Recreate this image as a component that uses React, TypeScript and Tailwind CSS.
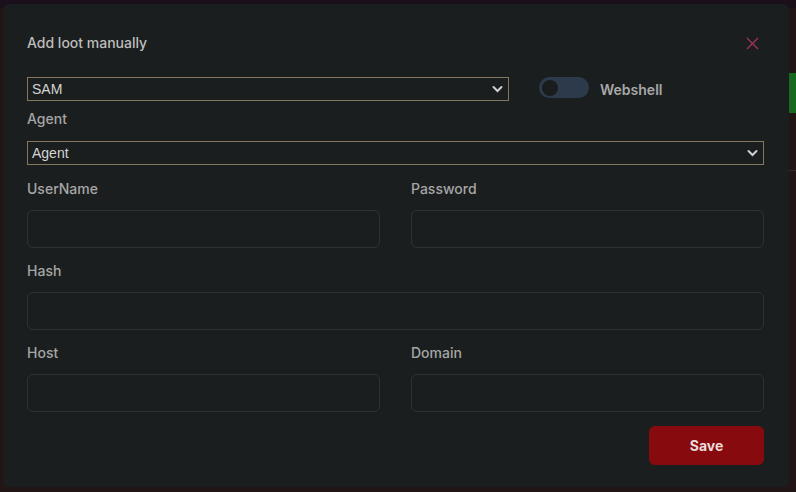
import React, { useState } from "react";

const labelCls = "block h-5 leading-5 text-[14px] font-medium text-[#a6a6a6]";
const inputCls =
  "block w-full h-[38px] rounded-md border border-[#2e3234] bg-transparent px-3 text-[13px] text-[#d0d0d0] outline-none";

const Chevron: React.FC = () => (
  <svg
    className="pointer-events-none absolute right-[6px] top-1/2 -translate-y-1/2"
    width="11"
    height="8"
    viewBox="0 0 11 8"
    fill="none"
  >
    <path d="M1.5 2 L5.5 6 L9.5 2" stroke="#d0d0d0" strokeWidth="2" strokeLinecap="round" />
  </svg>
);

const Select: React.FC<{ value: string; options: string[]; className?: string }> = ({
  value,
  options,
  className,
}) => (
  <div className={"relative " + (className || "")}>
    <select
      defaultValue={value}
      className="block w-full h-6 appearance-none border border-[#85765e] bg-[#1b1e1f] pl-1 pr-6 text-[14px] text-[#d4d4d4] outline-none font-['Liberation_Sans',Arial,sans-serif]"
    >
      {options.map((o) => (
        <option key={o}>{o}</option>
      ))}
    </select>
    <Chevron />
  </div>
);

const App: React.FC = () => {
  const [webshell, setWebshell] = useState(false);

  return (
    <div className="relative w-[796px] h-[492px] overflow-hidden bg-[#221515] font-['Inter','Open_Sans',sans-serif]">
      {/* page behind the dialog */}
      <div className="h-[8px] bg-[#1a0f1b]" />
      <div className="absolute right-0 top-[73px] h-[40px] w-[7px] bg-[#17691f]" />
      <div className="absolute right-0 top-[170px] h-px w-[7px] bg-[#3a2a2a]" />

      {/* dialog */}
      <div className="absolute left-[3px] top-[4px] w-[786px] h-[483px] rounded-md bg-[#1b1e1f] pl-6 pr-[25px] pt-[29px]">
        <div className="flex items-center justify-between h-5">
          <h2 className="text-[14px] leading-5 font-medium text-[#bdbdbd]">Add loot manually</h2>
          <button className="mr-[4px] flex h-4 w-4 items-center justify-center">
            <svg width="13" height="13" viewBox="0 0 13 13">
              <path d="M1 1 L12 12 M12 1 L1 12" stroke="#9e3458" strokeWidth="1.3" />
            </svg>
          </button>
        </div>

        <div className="mt-6 flex items-start">
          <Select value="SAM" options={["SAM", "LSA", "NTDS"]} className="w-[482px]" />
          <button
            onClick={() => setWebshell(!webshell)}
            className="ml-[30px] flex h-[21px] w-[50px] items-center rounded-full bg-[#2c3a4b] px-[3px]"
          >
            <span
              className={
                "block h-4 w-4 rounded-full bg-[#1a1c1d] transition-transform " +
                (webshell ? "translate-x-[28px]" : "")
              }
            />
          </button>
          <span className="ml-[11px] mt-[3px] text-[14px] leading-5 font-semibold text-[#a8a8a8]">
            Webshell
          </span>
        </div>

        <label className={labelCls + " mt-2"}>Agent</label>
        <Select value="Agent" options={["Agent"]} className="mt-3" />

        <div className="mt-[14px] grid grid-cols-2 gap-x-[31px]">
          <div>
            <label className={labelCls}>UserName</label>
            <input className={inputCls + " mt-[11px]"} />
          </div>
          <div>
            <label className={labelCls}>Password</label>
            <input type="password" className={inputCls + " mt-[11px]"} />
          </div>
        </div>

        <div className="mt-[13px]">
          <label className={labelCls}>Hash</label>
          <input className={inputCls + " mt-[11px]"} />
        </div>

        <div className="mt-[13px] grid grid-cols-2 gap-x-[31px]">
          <div>
            <label className={labelCls}>Host</label>
            <input className={inputCls + " mt-[11px]"} />
          </div>
          <div>
            <label className={labelCls}>Domain</label>
            <input className={inputCls + " mt-[11px]"} />
          </div>
        </div>

        <div className="mt-[14px] flex justify-end">
          <button className="h-[39px] w-[115px] rounded-md bg-[#860a0e] text-[14px] font-bold text-[#ecdcdc]">
            Save
          </button>
        </div>
      </div>
    </div>
  );
};

export default App;
